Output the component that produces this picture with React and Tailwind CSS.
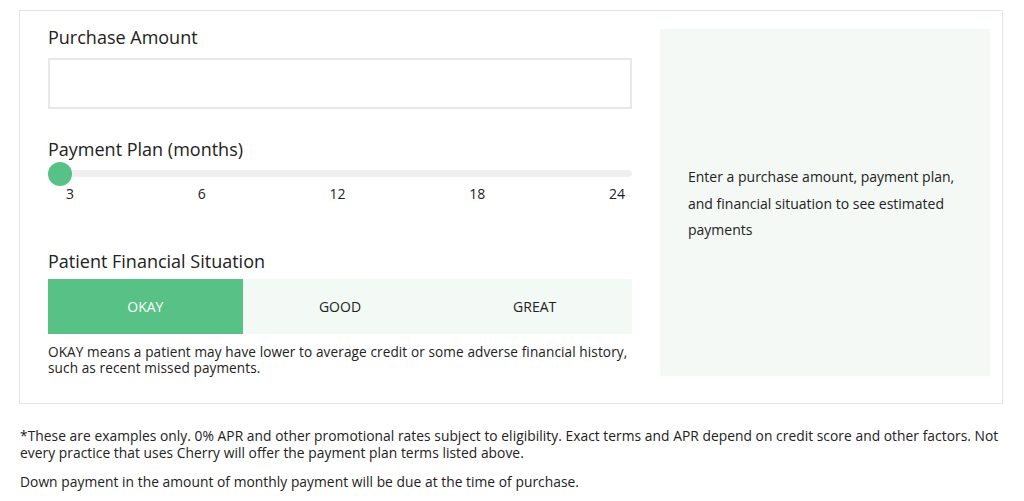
export default function App() {
  const labels = ["3", "6", "12", "18", "24"];
  return (
    <div className="bg-white w-[1024px] h-[501px] overflow-hidden text-[#222]" style={{ fontFamily: '"Open Sans", "Noto Sans", sans-serif' }}>
      <div className="ml-[19px] mt-[10px] w-[984px] border border-[#e4e4e4] flex pl-[28px] pr-[11px] pt-[18px] pb-[27px] gap-[28px]">
        <div className="w-[584px] flex flex-col">
          <h2 className="text-[18px] leading-[24px] mt-[-4px]">Purchase Amount</h2>
          <div className="mt-[9px] h-[51px] border-2 border-[#e8e8e8] bg-white"></div>
          <h2 className="text-[18px] leading-[24px] mt-[28px]">Payment Plan (months)</h2>
          <div className="relative mt-[9px] h-[7px] rounded-full bg-[#efefef]">
            <div className="absolute left-0 top-[-8.5px] w-[24px] h-[24px] rounded-full bg-[#58c185]"></div>
          </div>
          <div className="flex justify-between pl-[18px] pr-[7px] mt-[7px] text-[14px] leading-[19px]">
            {labels.map((l) => (
              <span key={l}>{l}</span>
            ))}
          </div>
          <h2 className="text-[18px] leading-[24px] mt-[46px]">Patient Financial Situation</h2>
          <div className="mt-[6px] grid grid-cols-3 h-[55px] bg-[#f3f9f5] text-[14px]">
            <div className="bg-[#58c185] text-white flex items-center justify-center">OKAY</div>
            <div className="flex items-center justify-center">GOOD</div>
            <div className="flex items-center justify-center">GREAT</div>
          </div>
          <p className="mt-[10px] text-[13.6px] leading-[16px] tracking-[0.1px]">
            OKAY means a patient may have lower to average credit or some adverse financial history, such as recent missed payments.
          </p>
        </div>
        <div className="w-[330px] h-[347px] bg-[#f4f9f6] flex items-center pl-[28px] pr-[30px]">
          <p className="text-[14px] leading-[26.5px] mt-[3px]">
            Enter a purchase amount, payment plan, and financial situation to see estimated payments
          </p>
        </div>
      </div>
      <div className="ml-[20px] mr-[10px] mt-[23px] text-[13.8px] leading-[17px] tracking-[0.04px]">
        <p>
          *These are examples only. 0% APR and other promotional rates subject to eligibility. Exact terms and APR depend on credit score and other factors. Not every practice that uses Cherry will offer the payment plan terms listed above.
        </p>
        <p className="mt-[12px]">Down payment in the amount of monthly payment will be due at the time of purchase.</p>
      </div>
    </div>
  );
}
